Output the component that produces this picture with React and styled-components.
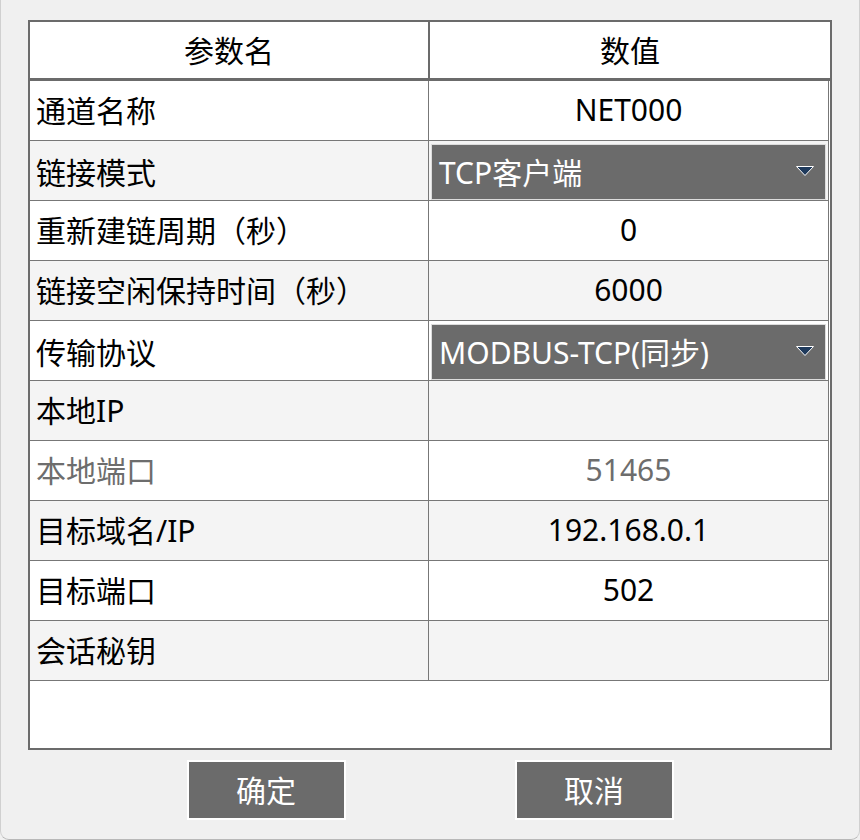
import React, { useState } from "react"
import styled, { createGlobalStyle } from "styled-components"

const GlobalStyle = createGlobalStyle`
  html, body {
    margin: 0;
    padding: 0;
    background: #f0f0f0;
  }
  body {
    font-family: "Noto Sans", "Noto Sans CJK SC", sans-serif;
  }
`

const params = [
    { name: "通道名称", value: "NET000" },
    { name: "链接模式", value: "TCP客户端", select: true },
    { name: "重新建链周期（秒）", value: "0" },
    { name: "链接空闲保持时间（秒）", value: "6000" },
    { name: "传输协议", value: "MODBUS-TCP(同步)", select: true },
    { name: "本地IP", value: "" },
    { name: "本地端口", value: "51465", disabled: true },
    { name: "目标域名/IP", value: "192.168.0.1" },
    { name: "目标端口", value: "502" },
    { name: "会话秘钥", value: "" },
]

const Arrow = () => (
    <svg width="20" height="12" viewBox="0 0 20 12">
        <polygon points="1.5,1.5 18.5,1.5 10,10.5" fill="#1f3a5c" stroke="#ffffff" strokeWidth="1" />
    </svg>
)

const App = () => {
    const [rows] = useState(params)

    return (
        <Window>
            <GlobalStyle />
            <Table>
                <Header>
                    <HeadCell>参数名</HeadCell>
                    <HeadCell last>数值</HeadCell>
                </Header>
                {rows.map((row, i) => (
                    <Row key={row.name} odd={i % 2 === 1}>
                        <NameCell disabled={row.disabled}>{row.name}</NameCell>
                        <ValueCell disabled={row.disabled}>
                            {row.select ? (
                                <Select>
                                    <span>{row.value}</span>
                                    <Arrow />
                                </Select>
                            ) : (
                                row.value
                            )}
                        </ValueCell>
                    </Row>
                ))}
                <Filler />
            </Table>
            <Buttons>
                <Button>确定</Button>
                <Button>取消</Button>
            </Buttons>
        </Window>
    )
}

const Window = styled.div`
width: 860px;
height: 840px;
box-sizing: border-box;
padding: 20px 28px 0 28px;
background: #f0f0f0;
border-left: 1px solid #d0d0d0;
border-right: 1px solid #d0d0d0;
border-bottom: 1px solid #b8b8b8;
border-radius: 0 0 9px 9px;
overflow: hidden;
display: flex;
flex-direction: column;
`

const Table = styled.div`
width: 804px;
height: 730px;
box-sizing: border-box;
border: 2px solid #6b6b6b;
background: #ffffff;
margin-left: -1px;
display: flex;
flex-direction: column;
font-size: 30px;
color: #000;
`

const Header = styled.div`
display: grid;
grid-template-columns: 400px 400px;
height: 59px;
box-sizing: border-box;
border-bottom: 3px solid #6b6b6b;
`

const HeadCell = styled.div`
display: flex;
align-items: center;
justify-content: center;
border-right: ${p => (p.last ? "none" : "2px solid #6b6b6b")};
padding-bottom: 3px;
`

const Row = styled.div`
display: grid;
grid-template-columns: 399px 400px;
height: 60px;
box-sizing: border-box;
border-bottom: 1px solid #777777;
background: ${p => (p.odd ? "#f4f4f4" : "#ffffff")};
width: 799px;
`

const NameCell = styled.div`
display: flex;
align-items: center;
padding: 0 0 3px 6px;
border-right: 1px solid #777777;
color: ${p => (p.disabled ? "#6d6d6d" : "#000")};
white-space: nowrap;
`

const ValueCell = styled.div`
display: flex;
align-items: center;
justify-content: center;
border-right: 1px solid #777777;
color: ${p => (p.disabled ? "#6d6d6d" : "#000")};
padding: 0 2px 3px 2px;
`

const Select = styled.div`
flex: 1;
height: 56px;
margin-top: 3px;
box-sizing: border-box;
border: 1px solid #dcdcdc;
background: #6b6b6b;
color: #ffffff;
display: flex;
align-items: center;
justify-content: space-between;
padding: 0 10px 2px 7px;
`

const Filler = styled.div`
flex: 1;
`

const Buttons = styled.div`
display: flex;
justify-content: center;
gap: 169px;
margin-top: 10px;
`

const Button = styled.button`
width: 159px;
height: 60px;
border: 2px solid #ffffff;
background: #6b6b6b;
color: #ffffff;
font-family: "Noto Sans", "Noto Sans CJK SC", sans-serif;
font-size: 30px;
padding: 0 0 3px 0;
cursor: pointer;
`

export default App
